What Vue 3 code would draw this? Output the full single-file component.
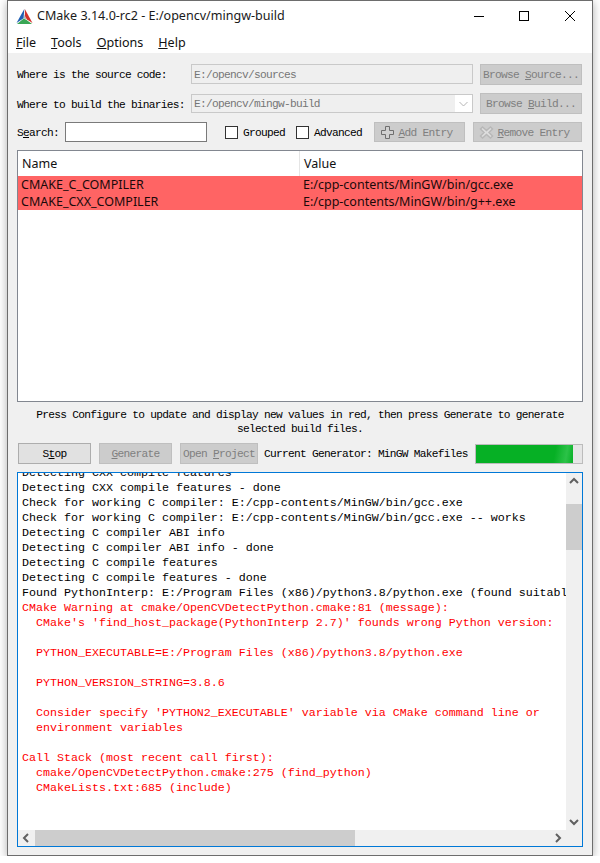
<script setup>
const logLines = [
  { t: 'Detecting CXX compile features' },
  { t: 'Detecting CXX compile features - done' },
  { t: 'Check for working C compiler: E:/cpp-contents/MinGW/bin/gcc.exe' },
  { t: 'Check for working C compiler: E:/cpp-contents/MinGW/bin/gcc.exe -- works' },
  { t: 'Detecting C compiler ABI info' },
  { t: 'Detecting C compiler ABI info - done' },
  { t: 'Detecting C compile features' },
  { t: 'Detecting C compile features - done' },
  { t: 'Found PythonInterp: E:/Program Files (x86)/python3.8/python.exe (found suitable version "3.8.6")' },
  { t: 'CMake Warning at cmake/OpenCVDetectPython.cmake:81 (message):', r: true },
  { t: "  CMake's 'find_host_package(PythonInterp 2.7)' founds wrong Python version:", r: true },
  { t: ' ', r: true },
  { t: '  PYTHON_EXECUTABLE=E:/Program Files (x86)/python3.8/python.exe', r: true },
  { t: ' ', r: true },
  { t: '  PYTHON_VERSION_STRING=3.8.6', r: true },
  { t: ' ', r: true },
  { t: "  Consider specify 'PYTHON2_EXECUTABLE' variable via CMake command line or", r: true },
  { t: '  environment variables', r: true },
  { t: ' ', r: true },
  { t: 'Call Stack (most recent call first):', r: true },
  { t: '  cmake/OpenCVDetectPython.cmake:275 (find_python)', r: true },
  { t: '  CMakeLists.txt:685 (include)', r: true },
]
const rows = [
  ['CMAKE_C_COMPILER', 'E:/cpp-contents/MinGW/bin/gcc.exe'],
  ['CMAKE_CXX_COMPILER', 'E:/cpp-contents/MinGW/bin/g++.exe'],
]
</script>

<template>
  <div class="window">
    <header class="titlebar">
      <svg class="logo" width="17" height="17" viewBox="0 0 17 17">
        <path d="M8.3 1 L0.5 15 L7.6 10.2 Z" fill="#1f5fb4" />
        <path d="M8.8 1 L16.5 15 L11 11.5 L9 9 Z" fill="#d3312b" />
        <path d="M1 16 L16 16 L10.6 12 L7.8 10.6 Z" fill="#3aa655" />
        <path d="M8.3 6 L7.9 10.4 L10.6 11.8 Z" fill="#b8b8b8" />
      </svg>
      <span class="title">CMake 3.14.0-rc2 - E:/opencv/mingw-build</span>
      <svg class="winbtn" width="101" height="14" viewBox="0 0 101 14">
        <path d="M0 7.5H10" stroke="#000" fill="none" />
        <rect x="45.5" y="2.5" width="9" height="9" stroke="#000" fill="none" />
        <path d="M91 2L101 12M101 2L91 12" stroke="#000" fill="none" />
      </svg>
    </header>
    <nav class="menubar">
      <span><u>F</u>ile</span>
      <span><u>T</u>ools</span>
      <span><u>O</u>ptions</span>
      <span><u>H</u>elp</span>
    </nav>
    <main class="content">
      <div class="row r1">
        <label class="lbl path-lbl">Where is the source code:</label>
        <div class="field disabled">E:/opencv/sources</div>
        <button class="btn off browse"><span>Browse <u>S</u>ource...</span></button>
      </div>
      <div class="row r2">
        <label class="lbl path-lbl">Where to build the binaries:</label>
        <div class="field disabled combo">
          <span>E:/opencv/mingw-build</span>
          <span class="drop">
            <svg width="9" height="6" viewBox="0 0 9 6"><path d="M0.5 1L4.5 5L8.5 1" stroke="#b5b5b5" fill="none" /></svg>
          </span>
        </div>
        <button class="btn off browse browse2"><span>Browse <u>B</u>uild...</span></button>
      </div>
      <div class="row r3">
        <label class="lbl search-lbl">S<u>e</u>arch:</label>
        <div class="search"></div>
        <span class="check c1"></span><span class="lbl cl">Grouped</span>
        <span class="check c2"></span><span class="lbl cl">Advanced</span>
        <button class="btn off add">
          <svg width="15" height="15" viewBox="0 0 15 15"><path d="M5.5 1.5H9.5V5.5H13.5V9.5H9.5V13.5H5.5V9.5H1.5V5.5H5.5Z" fill="#d0d0d0" stroke="#6f6f6f" /></svg>
          <span><u>A</u>dd Entry</span>
        </button>
        <button class="btn off remove">
          <svg width="15" height="15" viewBox="0 0 15 15"><path d="M3.5 2L7.5 5.5L11.5 2L13.5 4L10 7.5L13.5 11L11.5 13L7.5 9.5L3.5 13L1.5 11L5 7.5L1.5 4Z" fill="#dedede" stroke="#b8b8b8" stroke-width="1.5" /></svg>
          <span><u>R</u>emove Entry</span>
        </button>
      </div>
      <section class="table">
        <div class="thead">
          <div class="th name">Name</div>
          <div class="th">Value</div>
        </div>
        <div v-for="r in rows" :key="r[0]" class="tr">
          <div class="td name">{{ r[0] }}</div>
          <div class="td">{{ r[1] }}</div>
        </div>
      </section>
      <p class="hint">Press Configure to update and display new values in red, then press Generate to generate<br>selected build files.</p>
      <div class="row actions">
        <button class="btn stop"><span>S<u>t</u>op</span></button>
        <button class="btn off gen"><span><u>G</u>enerate</span></button>
        <button class="btn off open"><span>Open <u>P</u>roject</span></button>
        <span class="lbl gen-lbl">Current Generator: MinGW Makefiles</span>
        <div class="progress"><div class="fill"></div></div>
      </div>
      <section class="log">
        <div class="log-view">
          <div class="log-text">
            <div v-for="(l, i) in logLines" :key="i" class="line" :class="{ red: l.r }">{{ l.t }}</div>
          </div>
          <div class="vbar">
            <svg class="arrow" width="16" height="16" viewBox="0 0 16 16"><path d="M4 10L8 6L12 10" stroke="#606060" stroke-width="2" fill="none" /></svg>
            <div class="vtrack"><div class="vthumb"></div></div>
            <svg class="arrow" width="16" height="16" viewBox="0 0 16 16"><path d="M4 6L8 10L12 6" stroke="#606060" stroke-width="2" fill="none" /></svg>
          </div>
        </div>
        <div class="hbar">
          <svg class="arrow" width="17" height="16" viewBox="0 0 17 16"><path d="M10 4L6 8L10 12" stroke="#606060" stroke-width="2" fill="none" /></svg>
          <div class="htrack"><div class="hthumb"></div></div>
          <svg class="arrow" width="17" height="16" viewBox="0 0 17 16"><path d="M7 4L11 8L7 12" stroke="#606060" stroke-width="2" fill="none" /></svg>
          <div class="corner"></div>
        </div>
      </section>
    </main>
  </div>
</template>

<style>
html, body { margin: 0; background: #fff; }
</style>

<style scoped>
.window {
  box-sizing: border-box;
  width: 586px;
  height: 856px;
  margin-left: 7px;
  border: 1px solid #6d6d6d;
  background: #f0f0f0;
  box-shadow: 0 2px 9px rgba(0, 0, 0, 0.32);
  display: flex;
  flex-direction: column;
  overflow: hidden;
}
.titlebar {
  height: 30px;
  background: #fff;
  display: flex;
  align-items: center;
  padding-left: 8px;
  flex: none;
}
.logo { margin-right: 4px; }
.title {
  font: 12.55px/30px "Noto Sans", sans-serif;
  color: #1a1a1a;
  white-space: nowrap;
  flex: 1;
}
.winbtn { margin-right: 17px; }
.menubar {
  height: 22px;
  background: #fff;
  display: flex;
  gap: 15px;
  padding-left: 8px;
  font: 12.55px/24px "Noto Sans", sans-serif;
  color: #111;
  flex: none;
}
.content {
  flex: 1;
  padding: 0 9px;
  display: flex;
  flex-direction: column;
  min-height: 0;
}
.row { display: flex; align-items: center; }
.r1 { margin-top: 11px; height: 20px; }
.r2 { margin-top: 9px; height: 21px; }
.r3 { margin-top: 8px; height: 20px; }
.lbl, .field, .btn, .hint {
  font-family: "Liberation Mono", "DejaVu Sans Mono", monospace;
  font-size: 11.2px;
  letter-spacing: -0.72px;
}
.lbl { color: #000; white-space: nowrap; }
.path-lbl { width: 174px; flex: none; padding-top: 2px; }
.r3 .lbl, .gen-lbl { padding-top: 1px; }
.field {
  box-sizing: border-box;
  width: 282px;
  height: 20px;
  border: 1px solid #c9c9c9;
  background: #efefef;
  color: #767676;
  padding-left: 2px;
  line-height: 20px;
  flex: none;
}
.combo {
  height: 19px;
  display: flex;
  justify-content: space-between;
  line-height: 19px;
}
.drop {
  width: 17px;
  background: #fff;
  display: flex;
  align-items: center;
  justify-content: center;
}
.btn {
  box-sizing: border-box;
  height: 21px;
  border: 1px solid #adadad;
  background: #e1e1e1;
  color: #000;
  padding: 1px 0 0;
  display: flex;
  align-items: center;
  justify-content: center;
  flex: none;
  white-space: nowrap;
}
.btn.off {
  background: #cccccc;
  border-color: #bfbfbf;
  color: #7f7f7f;
}
.browse { width: 102px; margin-left: 7px; }
.search-lbl { width: 48px; flex: none; }
.search {
  box-sizing: border-box;
  width: 142px;
  height: 20px;
  background: #fff;
  border: 1px solid #7a7a7a;
  flex: none;
}
.check {
  box-sizing: border-box;
  width: 13px;
  height: 13px;
  background: #fff;
  border: 1px solid #333;
  flex: none;
  margin-right: 5px;
}
.c1 { margin-left: 18px; }
.c2 { margin-left: 11px; }
.add { width: 91px; margin-left: 12px; gap: 3px; height: 20px; padding-right: 6px; }
.remove { width: 109px; margin-left: 8px; gap: 3px; height: 20px; padding-right: 6px; }
.table {
  box-sizing: border-box;
  width: 566px;
  height: 252px;
  margin-top: 8px;
  background: #fff;
  border: 1px solid #828790;
  flex: none;
}
.thead {
  display: flex;
  height: 25px;
  font: 12.5px/25px "Noto Sans", sans-serif;
  color: #111;
}
.th { padding-left: 4px; }
.th.name { width: 277px; border-right: 1px solid #e5e5e5; }
.tr {
  display: flex;
  height: 17px;
  background: #ff6464;
  font: 12.5px/17px "Noto Sans", sans-serif;
  color: #1a0a0a;
}
.td { padding-left: 3px; }
.td.name { width: 279px; }
.hint {
  margin: 6px 0 0;
  text-align: center;
  line-height: 14px;
  color: #000;
  height: 28px;
}
.actions { margin-top: 7px; height: 21px; }
.stop { width: 73px; margin-left: 1px; border-color: #adadad; }
.gen { width: 73px; margin-left: 8px; }
.open { width: 78px; margin-left: 8px; }
.gen-lbl { margin-left: 6px; width: 211px; flex: none; }
.progress {
  box-sizing: border-box;
  width: 108px;
  height: 20px;
  border: 1px solid #bcbcbc;
  background: #e6e6e6;
}
.fill {
  width: 97px;
  height: 100%;
  background: linear-gradient(100deg, #06b025 80%, #2cc248 92%, #06b025 100%);
}
.log {
  box-sizing: border-box;
  width: 566px;
  height: 375px;
  margin-top: 8px;
  background: #fff;
  border: 1px solid #0078d7;
  display: flex;
  flex-direction: column;
  flex: none;
}
.log-view { flex: 1; min-height: 0; display: flex; }
.log-text {
  flex: 1;
  min-width: 0;
  overflow: hidden;
  padding-left: 4px;
}
.line {
  font: 11.67px/15px "Liberation Mono", "DejaVu Sans Mono", monospace;
  color: #000;
  white-space: pre;
  height: 15px;
}
.line:first-child { margin-top: -7px; }
.line.red { color: #ff0000; }
.vbar {
  width: 16px;
  background: #f0f0f0;
  display: flex;
  flex-direction: column;
  flex: none;
}
.arrow { flex: none; display: block; }
.vtrack { flex: 1; padding-top: 15px; }
.vthumb { height: 46px; background: #cdcdcd; }
.hbar {
  height: 16px;
  background: #f0f0f0;
  display: flex;
  flex: none;
}
.htrack { flex: 1; }
.hthumb { width: 320px; height: 100%; background: #cdcdcd; }
.corner { width: 16px; }
</style>
